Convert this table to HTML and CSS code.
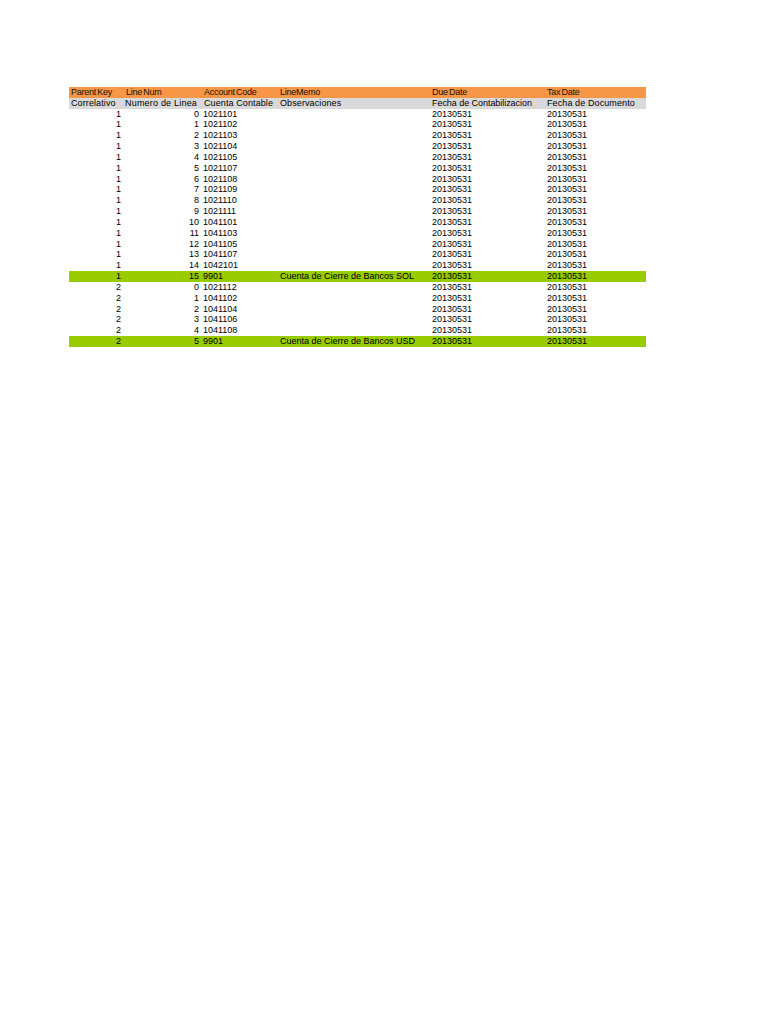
FILE: index.html
```html
<!DOCTYPE html>
<html>
<head>
<meta charset="utf-8">
<link rel="stylesheet" href="styles.css">
</head>
<body>
<div class="page">
  <div class="sheet">
    <div class="row head1"><span>Parent Key</span><span>Line Num</span><span>Account Code</span><span>LineMemo</span><span>Due Date</span><span>Tax Date</span></div>
    <div class="row head2"><span>Correlativo</span><span>Numero de Linea</span><span>Cuenta Contable</span><span>Observaciones</span><span>Fecha de Contabilizacion</span><span>Fecha de Documento</span></div>
    <div class="row"><span class="r">1</span><span class="r">0</span><span>1021101</span><span></span><span>20130531</span><span>20130531</span></div>
    <div class="row"><span class="r">1</span><span class="r">1</span><span>1021102</span><span></span><span>20130531</span><span>20130531</span></div>
    <div class="row"><span class="r">1</span><span class="r">2</span><span>1021103</span><span></span><span>20130531</span><span>20130531</span></div>
    <div class="row"><span class="r">1</span><span class="r">3</span><span>1021104</span><span></span><span>20130531</span><span>20130531</span></div>
    <div class="row"><span class="r">1</span><span class="r">4</span><span>1021105</span><span></span><span>20130531</span><span>20130531</span></div>
    <div class="row"><span class="r">1</span><span class="r">5</span><span>1021107</span><span></span><span>20130531</span><span>20130531</span></div>
    <div class="row"><span class="r">1</span><span class="r">6</span><span>1021108</span><span></span><span>20130531</span><span>20130531</span></div>
    <div class="row"><span class="r">1</span><span class="r">7</span><span>1021109</span><span></span><span>20130531</span><span>20130531</span></div>
    <div class="row"><span class="r">1</span><span class="r">8</span><span>1021110</span><span></span><span>20130531</span><span>20130531</span></div>
    <div class="row"><span class="r">1</span><span class="r">9</span><span>1021111</span><span></span><span>20130531</span><span>20130531</span></div>
    <div class="row"><span class="r">1</span><span class="r">10</span><span>1041101</span><span></span><span>20130531</span><span>20130531</span></div>
    <div class="row"><span class="r">1</span><span class="r">11</span><span>1041103</span><span></span><span>20130531</span><span>20130531</span></div>
    <div class="row"><span class="r">1</span><span class="r">12</span><span>1041105</span><span></span><span>20130531</span><span>20130531</span></div>
    <div class="row"><span class="r">1</span><span class="r">13</span><span>1041107</span><span></span><span>20130531</span><span>20130531</span></div>
    <div class="row"><span class="r">1</span><span class="r">14</span><span>1042101</span><span></span><span>20130531</span><span>20130531</span></div>
    <div class="row green"><span class="r">1</span><span class="r">15</span><span>9901</span><span class="memo">Cuenta de Cierre de Bancos SOL</span><span>20130531</span><span>20130531</span></div>
    <div class="row"><span class="r">2</span><span class="r">0</span><span>1021112</span><span></span><span>20130531</span><span>20130531</span></div>
    <div class="row"><span class="r">2</span><span class="r">1</span><span>1041102</span><span></span><span>20130531</span><span>20130531</span></div>
    <div class="row"><span class="r">2</span><span class="r">2</span><span>1041104</span><span></span><span>20130531</span><span>20130531</span></div>
    <div class="row"><span class="r">2</span><span class="r">3</span><span>1041106</span><span></span><span>20130531</span><span>20130531</span></div>
    <div class="row"><span class="r">2</span><span class="r">4</span><span>1041108</span><span></span><span>20130531</span><span>20130531</span></div>
    <div class="row green"><span class="r">2</span><span class="r">5</span><span>9901</span><span class="memo">Cuenta de Cierre de Bancos USD</span><span>20130531</span><span>20130531</span></div>
  </div>
</div>
</body>
</html>
```

FILE: styles.css
```css
html, body {
  margin: 0;
  padding: 0;
  background: #ffffff;
}

.page {
  width: 768px;
  height: 1024px;
  padding: 87px 0 0 69px;
  box-sizing: border-box;
}

.sheet {
  width: 577px;
  font-family: "Liberation Sans", Arial, sans-serif;
  font-size: 9px;
  color: #000000;
}

.row {
  display: grid;
  grid-template-columns: 54px 78px 77px 152px 115px 101px;
  height: 10.84px;
  line-height: 10.84px;
  white-space: nowrap;
}

.row span {
  padding-left: 2px;
  overflow: hidden;
}

.row span.r {
  text-align: right;
  padding-left: 0;
  padding-right: 2px;
}

.head1 {
  background: #f79646;
  letter-spacing: -0.25px;
  word-spacing: -1px;
  color: #1a1208;
}

.head1 span:nth-child(2),
.head1 span:nth-child(3) {
  padding-left: 3px;
}

.head2 {
  background: #d9d9d9;
  letter-spacing: 0.1px;
}

.head2 span:nth-child(2) {
  letter-spacing: 0.2px;
}

.head2 span:nth-child(3) {
  padding-left: 3px;
}

.head2 span:nth-child(5) {
  letter-spacing: -0.05px;
}

.green {
  background: #99cc00;
}

.memo {
  letter-spacing: 0px;
}
```
